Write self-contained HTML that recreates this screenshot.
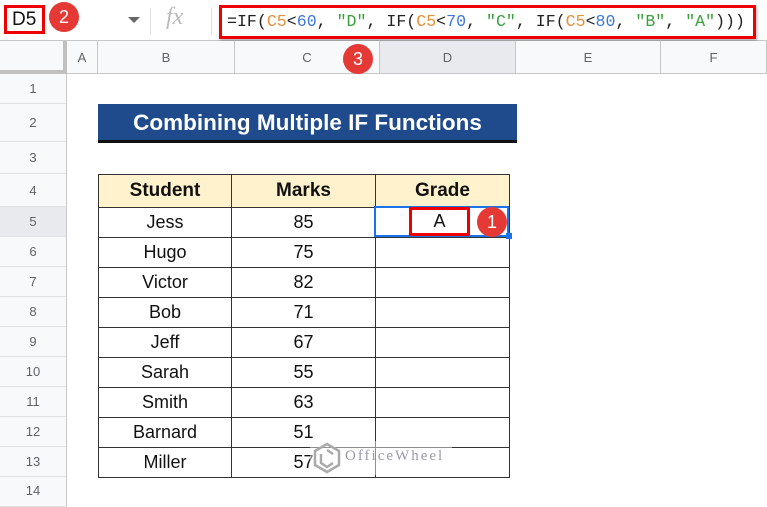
<!DOCTYPE html>
<html><head><style>
*{margin:0;padding:0;box-sizing:border-box}
body{width:767px;height:496px;overflow:hidden;background:#fff;font-family:"Liberation Sans",Arial,sans-serif;position:relative}
.a{position:absolute}
.ch{position:absolute;top:41px;height:33px;border-right:1px solid #c7c7c7;border-bottom:1px solid #c7c7c7;background:#f8f9fa;color:#5f6368;font-size:13px;text-align:center;line-height:33px}
.rh{position:absolute;left:0;width:67px;border-right:1px solid #c7c7c7;border-bottom:1px solid #e0e0e0;background:#f8f9fa;color:#5f6368;font-size:13px;text-align:center}
.badge{position:absolute;width:30px;height:30px;border-radius:50%;background:#e53935;color:#fff;font-size:18px;text-align:center;line-height:30px}
table{position:absolute;left:98px;top:174px;border-collapse:collapse}
td{border:1.5px solid #333;text-align:center;font-size:18px;height:30px;padding:0;color:#111}
th{border:1.5px solid #333;background:#fff2cc;font-size:19px;height:33px;font-weight:bold;color:#111}
.f span.o{color:#e69138}.f span.b{color:#3c78d8}.f span.g{color:#38a13c}
</style></head><body>
<div class="a" style="left:0;top:0;width:767px;height:41px;background:#fff;border-bottom:1px solid #c7c7c7"></div>
<div class="a" style="left:4px;top:5px;width:41px;height:29px;border:3px solid #e00;font-size:19px;line-height:23px;padding-left:5px;color:#111">D5</div>
<div class="badge" style="left:49px;top:2px">2</div>
<div class="a" style="left:128px;top:17px;width:0;height:0;border-left:6px solid transparent;border-right:6px solid transparent;border-top:6px solid #666"></div>
<div class="a" style="left:150px;top:8px;width:1px;height:26px;background:#ddd"></div>
<div class="a" style="left:166px;top:4px;font-family:'Liberation Serif',serif;font-style:italic;font-size:24px;color:#bbb">fx</div>
<div class="a" style="left:211px;top:8px;width:1px;height:26px;background:#ddd"></div>
<div class="a f" style="left:219px;top:5px;width:537px;height:34px;border:3px solid #e00;font-family:'Liberation Mono',monospace;font-size:16.6px;line-height:28px;padding-left:5px;color:#222;white-space:nowrap;overflow:hidden;box-shadow:1px 2px 3px rgba(0,0,0,.3)">=IF(<span class="o">C5</span>&lt;<span class="b">60</span>, <span class="g">"D"</span>, IF(<span class="o">C5</span>&lt;<span class="b">70</span>, <span class="g">"C"</span>, IF(<span class="o">C5</span>&lt;<span class="b">80</span>, <span class="g">"B"</span>, <span class="g">"A"</span>)))</div>
<div class="ch" style="left:0;width:67px;border-right:4px solid #c0c0c0;border-bottom:4px solid #c0c0c0"></div>
<div class="ch" style="left:67px;width:31px">A</div>
<div class="ch" style="left:98px;width:137px">B</div>
<div class="ch" style="left:235px;width:145px">C</div>
<div class="ch" style="left:380px;width:136px;background:#e8eaed">D</div>
<div class="ch" style="left:516px;width:145px">E</div>
<div class="ch" style="left:661px;width:106px">F</div>
<div class="badge" style="left:343px;top:44px">3</div>
<div class="rh" style="top:74px;height:30px;line-height:30px">1</div>
<div class="rh" style="top:104px;height:38px;line-height:38px">2</div>
<div class="rh" style="top:142px;height:32px;line-height:32px">3</div>
<div class="rh" style="top:174px;height:33px;line-height:33px">4</div>
<div class="rh" style="top:207px;height:30px;line-height:30px;background:#e8eaed">5</div>
<div class="rh" style="top:237px;height:30px;line-height:30px">6</div>
<div class="rh" style="top:267px;height:30px;line-height:30px">7</div>
<div class="rh" style="top:297px;height:30px;line-height:30px">8</div>
<div class="rh" style="top:327px;height:30px;line-height:30px">9</div>
<div class="rh" style="top:357px;height:30px;line-height:30px">10</div>
<div class="rh" style="top:387px;height:30px;line-height:30px">11</div>
<div class="rh" style="top:417px;height:30px;line-height:30px">12</div>
<div class="rh" style="top:447px;height:30px;line-height:30px">13</div>
<div class="rh" style="top:477px;height:30px;line-height:28px">14</div>
<div class="a" style="left:98px;top:104px;width:419px;height:39px;background:#1f4a8c;border-bottom:3px solid #111;color:#fff;font-weight:bold;font-size:22.5px;text-align:center;line-height:37px">Combining Multiple IF Functions</div>
<table>
<tr><th style="width:133px">Student</th><th style="width:144px">Marks</th><th style="width:134px">Grade</th></tr>
<tr><td>Jess</td><td>85</td><td></td></tr>
<tr><td>Hugo</td><td>75</td><td></td></tr>
<tr><td>Victor</td><td>82</td><td></td></tr>
<tr><td>Bob</td><td>71</td><td></td></tr>
<tr><td>Jeff</td><td>67</td><td></td></tr>
<tr><td>Sarah</td><td>55</td><td></td></tr>
<tr><td>Smith</td><td>63</td><td></td></tr>
<tr><td>Barnard</td><td>51</td><td></td></tr>
<tr><td>Miller</td><td>57</td><td></td></tr>
</table>
<div class="a" style="left:374px;top:206px;width:135px;height:31px;border:2px solid #1a73e8"></div>
<div class="a" style="left:506px;top:233px;width:6px;height:6px;background:#1a73e8"></div>
<div class="a" style="left:409px;top:207px;width:61px;height:29px;border:3px solid #e00;text-align:center;font-size:18px;line-height:23px;color:#111;background:#fff">A</div>
<div class="badge" style="left:477px;top:207px">1</div>
<div class="a" style="left:310px;top:441px;width:142px;height:34px;background:rgba(255,255,255,.45)"></div>
<svg class="a" style="left:310px;top:441px" width="34" height="34" viewBox="0 0 34 34"><path d="M17 3 L29 10 L29 24 L17 31 L5 24 L5 10 Z M17 9 L23 13 M11 13 L11 22 L17 26 L23 22" fill="none" stroke="#aaa" stroke-width="2.5"/></svg>
<div class="a" style="left:345px;top:448px;font-family:'Liberation Serif',serif;font-size:15px;letter-spacing:2px;color:#9a9aa8">OfficeWheel</div>
</body></html>
